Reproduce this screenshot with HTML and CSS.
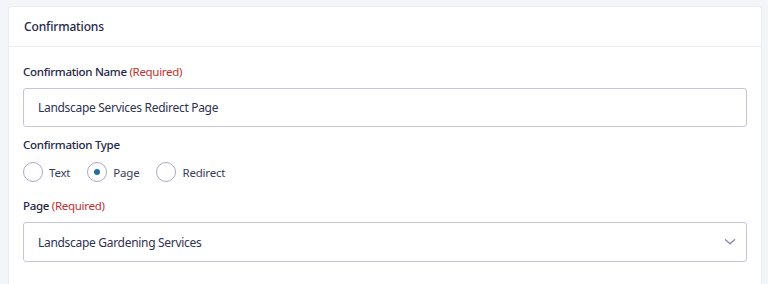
FILE: index.html
```html
<!DOCTYPE html>
<html lang="en">
<head>
    <meta charset="UTF-8">
    <meta name="viewport" content="width=device-width, initial-scale=1.0">
    <title>Confirmations</title>
    <link rel="stylesheet" href="styles.css">
</head>
<body>
    <div class="panel">
        <div class="panel-header">
            <h2>Confirmations</h2>
        </div>
        <div class="panel-body">
            <div class="field field-name">
                <label class="field-label">Confirmation Name <span class="required">(Required)</span></label>
                <div class="text-input">Landscape Services Redirect Page</div>
            </div>
            <div class="field field-type">
                <label class="field-label">Confirmation Type</label>
                <div class="radios">
                    <span class="radio"><span class="circle"></span>Text</span>
                    <span class="radio"><span class="circle checked"></span>Page</span>
                    <span class="radio"><span class="circle"></span>Redirect</span>
                </div>
            </div>
            <div class="field">
                <label class="field-label">Page <span class="required">(Required)</span></label>
                <div class="text-input select">
                    Landscape Gardening Services
                    <svg width="12" height="8" viewBox="0 0 12 8"><path d="M1.5 1.8l4.5 4 4.5-4" fill="none" stroke="#8d8aae" stroke-width="1.5" stroke-linecap="round" stroke-linejoin="round"/></svg>
                </div>
            </div>
        </div>
    </div>
</body>
</html>
```

FILE: styles.css
```css
body {
    font-family: "Noto Sans", sans-serif;
    background: #f3f5f9;
    margin: 0;
    padding: 6px 6px 0 8px;
    color: #242748;
}
.panel {
    background: #fff;
    border: 1px solid #e9ecf2;
    border-bottom: none;
    border-radius: 3px 3px 0 0;
    height: 290px;
}
.panel-header {
    height: 39px;
    border-bottom: 1px solid #eceef3;
    display: flex;
    align-items: center;
    padding-left: 15px;
}
.panel-header h2 {
    font-size: 12px;
    font-weight: 500;
    letter-spacing: -0.15px;
    margin: 0;
}
.panel-body {
    padding: 16px 14px 0 14px;
}
.field-name {
    margin-bottom: 9px;
}
.field-type {
    margin-bottom: 15px;
}
.field-label {
    display: block;
    font-size: 11.5px;
    font-weight: 500;
    letter-spacing: -0.3px;
    line-height: 18px;
    margin-bottom: 7px;
}
.field-type .field-label {
    margin-bottom: 8px;
}
.required {
    color: #bf2f2f;
    font-weight: 400;
}
.text-input {
    height: 37px;
    border: 1px solid #c6c4da;
    border-radius: 3px;
    display: flex;
    align-items: center;
    padding: 0 14px;
    font-size: 12px;
    letter-spacing: -0.3px;
    color: #2f3250;
}
.select {
    justify-content: space-between;
    height: 38px;
    padding-right: 10px;
}
.radios {
    display: flex;
    align-items: center;
    gap: 17px;
    font-size: 11.5px;
    letter-spacing: -0.2px;
    color: #3a3d58;
}
.radio {
    display: flex;
    align-items: center;
    gap: 6px;
}
.circle {
    width: 18px;
    height: 18px;
    border: 1px solid #aba8c6;
    border-radius: 50%;
    display: flex;
    align-items: center;
    justify-content: center;
}
.circle.checked::after {
    content: "";
    width: 6px;
    height: 6px;
    border-radius: 50%;
    background: #2b6e9d;
}
```
